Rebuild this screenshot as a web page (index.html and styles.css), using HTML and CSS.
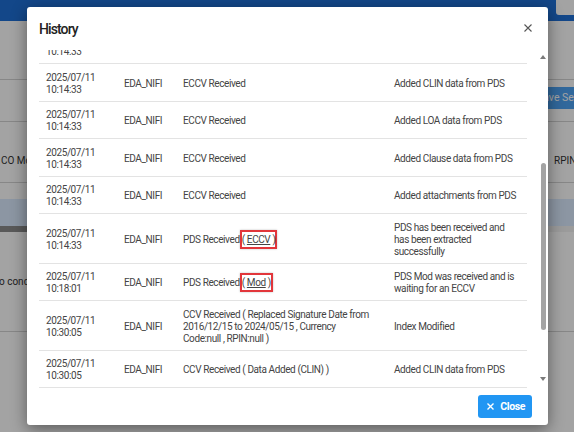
FILE: index.html
```html
<!DOCTYPE html>
<html lang="en">
<head>
<meta charset="utf-8">
<title>History</title>
<link rel="stylesheet" href="styles.css">
</head>
<body>
<div class="page">
  <div class="bg">
    <div class="bg-nav"><span class="bg-navbtn"></span></div>
    <div class="bg-head"></div>
    <div class="bg-tools"><span class="bg-btn">Save Search</span></div>
    <div class="bg-thead"><span class="bg-th">CO Mod</span><span class="bg-th">RPIN</span></div>
    <div class="bg-sel"></div>
    <div class="bg-hscroll"><span class="bg-hthumb"></span></div>
    <div class="bg-row"><span class="bg-td">o condition</span></div>
  </div>
  <div class="overlay"></div>

  <div class="modal">
    <div class="modal-header">
      <h2 class="modal-title">History</h2>
      <svg class="icon-x" viewBox="0 0 8 8" width="8" height="8"><path d="M0.5 0.5L7.5 7.5M7.5 0.5L0.5 7.5" stroke="#555" stroke-width="1.1" fill="none"/></svg>
    </div>
    <div class="modal-body">
      <div class="table-wrap">
        <div class="rows">
          <div class="row">
            <div class="cell">2025/07/11 10:14:33</div><div class="cell">EDA_NIFI</div>
            <div class="cell cell-action">ECCV Received</div><div class="cell cell-desc">Added Index data from PDS</div>
          </div>
          <div class="row">
            <div class="cell">2025/07/11 10:14:33</div><div class="cell">EDA_NIFI</div>
            <div class="cell cell-action">ECCV Received</div><div class="cell cell-desc">Added CLIN data from PDS</div>
          </div>
          <div class="row">
            <div class="cell">2025/07/11 10:14:33</div><div class="cell">EDA_NIFI</div>
            <div class="cell cell-action">ECCV Received</div><div class="cell cell-desc">Added LOA data from PDS</div>
          </div>
          <div class="row">
            <div class="cell">2025/07/11 10:14:33</div><div class="cell">EDA_NIFI</div>
            <div class="cell cell-action">ECCV Received</div><div class="cell cell-desc">Added Clause data from PDS</div>
          </div>
          <div class="row">
            <div class="cell">2025/07/11 10:14:33</div><div class="cell">EDA_NIFI</div>
            <div class="cell cell-action">ECCV Received</div><div class="cell cell-desc">Added attachments from PDS</div>
          </div>
          <div class="row">
            <div class="cell">2025/07/11 10:14:33</div><div class="cell">EDA_NIFI</div>
            <div class="cell cell-action">PDS Received <span class="mark">( <span class="link">ECCV</span> )</span></div>
            <div class="cell cell-desc">PDS has been received and has been extracted successfully</div>
          </div>
          <div class="row">
            <div class="cell">2025/07/11 10:18:01</div><div class="cell">EDA_NIFI</div>
            <div class="cell cell-action">PDS Received <span class="mark">( <span class="link">Mod</span> )</span></div>
            <div class="cell cell-desc">PDS Mod was received and is waiting for an ECCV</div>
          </div>
          <div class="row">
            <div class="cell">2025/07/11 10:30:05</div><div class="cell">EDA_NIFI</div>
            <div class="cell cell-action">CCV Received ( Replaced Signature Date from 2016/12/15 to 2024/05/15 , Currency Code:null , RPIN:null )</div>
            <div class="cell cell-desc">Index Modified</div>
          </div>
          <div class="row">
            <div class="cell">2025/07/11 10:30:05</div><div class="cell">EDA_NIFI</div>
            <div class="cell cell-action">CCV Received ( Data Added (CLIN) )</div>
            <div class="cell cell-desc">Added CLIN data from PDS</div>
          </div>
        </div>
      </div>
      <div class="scrollbar">
        <div class="sb-btn"><span class="arrow-up"></span></div>
        <div class="sb-track"><div class="sb-thumb"></div></div>
        <div class="sb-btn"><span class="arrow-down"></span></div>
      </div>
    </div>
    <div class="modal-footer">
      <button class="btn-close" type="button">
        <svg viewBox="0 0 7 7" width="7" height="7"><path d="M0.5 0.5L6.5 6.5M6.5 0.5L0.5 6.5" stroke="#fff" stroke-width="1.4" fill="none"/></svg>
        <span>Close</span>
      </button>
    </div>
  </div>
</div>
</body>
</html>
```
FILE: styles.css
```css
body {
  margin: 0;
}

.page {
  position: relative;
  width: 574px;
  height: 432px;
  overflow: hidden;
  background: #fff;
  font-family: Roboto, "Noto Sans", sans-serif;
}

/* background page */
.bg-nav {
  height: 21px;
  background: #1f6fd6;
  display: flex;
  justify-content: flex-end;
}

.bg-navbtn {
  width: 18px;
  height: 15px;
  background: #fff;
  border-radius: 0 0 0 3px;
}

.bg-head {
  height: 58px;
  border-bottom: 1px solid #d4d4d4;
}

.bg-tools {
  height: 41px;
  border-bottom: 1px solid #d4d4d4;
  display: grid;
  grid-template-columns: 529px auto;
}

.bg-btn {
  grid-column: 2;
  align-self: start;
  margin-top: 7px;
  height: 22px;
  line-height: 22px;
  padding: 0 8px;
  background: #4da3f5;
  color: #fff;
  font-size: 10.5px;
  border-radius: 3px;
  white-space: nowrap;
}

.bg-thead {
  height: 44px;
  padding-top: 16px;
  border-bottom: 1px solid #d4d4d4;
  display: grid;
  grid-template-columns: 554px 1fr;
  align-items: center;
  font-size: 10px;
  color: #333;
  white-space: nowrap;
}

.bg-th {
  padding-left: 1px;
}

.bg-th + .bg-th {
  padding-left: 0;
}

.bg-sel {
  margin-top: 16px;
  height: 27px;
  background: #dcebff;
}

.bg-hscroll {
  height: 6px;
  background: #f2f2f2;
}

.bg-hthumb {
  display: block;
  width: 320px;
  height: 6px;
  background: #8c8c8c;
}

.bg-row {
  height: 100px;
  padding-top: 44px;
  box-sizing: border-box;
  border-bottom: 1px solid #d4d4d4;
  font-size: 10px;
  color: #333;
  white-space: nowrap;
}

.bg-td {
  margin-left: -1px;
}

.overlay {
  position: absolute;
  inset: 0;
  background: rgba(0, 0, 0, 0.36);
}

/* modal */
.modal {
  position: absolute;
  left: 27px;
  top: 7px;
  width: 521px;
  height: 418px;
  background: #fff;
  border-radius: 3px;
  box-shadow: 0 4px 16px rgba(0, 0, 0, 0.45);
  display: flex;
  flex-direction: column;
}

.modal-header {
  height: 43px;
  box-sizing: border-box;
  padding: 12.5px 16px 0 12px;
  display: flex;
  justify-content: space-between;
  align-items: flex-start;
}

.modal-title {
  margin: 0;
  font-size: 14px;
  line-height: 18px;
  font-weight: 500;
  color: #222;
  letter-spacing: -0.9px;
}

.icon-x {
  margin-top: 4px;
}

.modal-body {
  height: 338px;
  display: flex;
}

.table-wrap {
  flex: 1;
  overflow: hidden;
  padding-left: 12px;
}

.rows {
  width: 488px;
  margin-top: -23.5px;
  font-size: 10px;
  line-height: 12px;
  letter-spacing: -0.4px;
  color: #444;
}

.row {
  display: grid;
  grid-template-columns: 78px 59px 211px 140px;
  align-items: center;
  padding: 7.5px 0 5px;
  border-bottom: 1px solid #e3e3e3;
}

.cell {
  padding: 0 7px;
}

.cell-action {
  padding-right: 15px;
}

.cell-desc {
  padding-right: 8px;
}

.mark {
  border: 2px solid #e2363b;
  padding: 2px 0;
  margin: 0 -2px;
  box-shadow: 0 0 2px rgba(0, 0, 0, 0.25);
}

.link {
  text-decoration: underline;
}

.scrollbar {
  width: 11px;
  display: flex;
  flex-direction: column;
  padding-bottom: 2px;
}

.sb-btn {
  height: 14px;
  display: flex;
  align-items: center;
  justify-content: center;
}

.arrow-up {
  width: 0;
  height: 0;
  border-left: 3px solid transparent;
  border-right: 3px solid transparent;
  border-bottom: 4px solid #7a7a7a;
}

.arrow-down {
  width: 0;
  height: 0;
  border-left: 3px solid transparent;
  border-right: 3px solid transparent;
  border-top: 4px solid #7a7a7a;
}

.sb-track {
  flex: 1;
}

.sb-thumb {
  width: 5px;
  height: 167px;
  margin: 99px 0 0 4px;
  background: #a3a3a3;
  border-radius: 3px;
}

.modal-footer {
  flex: 1;
  display: flex;
  justify-content: flex-end;
  align-items: flex-start;
  padding: 7px 16px 0;
}

.btn-close {
  display: flex;
  align-items: center;
  gap: 6px;
  height: 23px;
  padding: 0 7px 0 9px;
  background: #2196f3;
  color: #fff;
  border: none;
  border-radius: 3px;
  font-family: Roboto, "Noto Sans", sans-serif;
  font-size: 10.5px;
  font-weight: 700;
  letter-spacing: -0.4px;
}
```
